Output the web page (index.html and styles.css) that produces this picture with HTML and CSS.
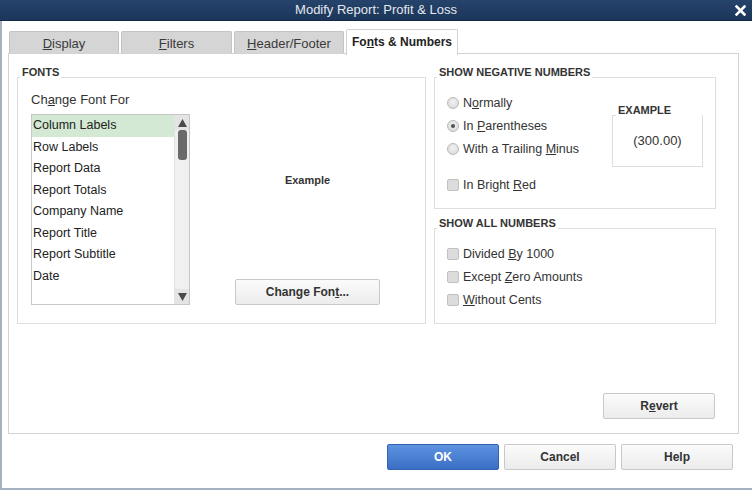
FILE: index.html
```html
<!DOCTYPE html>
<html>
<head>
<meta charset="utf-8">
<title>Modify Report: Profit &amp; Loss</title>
<link rel="stylesheet" href="styles.css">
</head>
<body>
<div class="titlebar">
  <span></span>
  <span class="title">Modify Report: Profit &amp; Loss</span>
  <span class="close"><svg width="11" height="11" viewBox="0 0 11 11"><path d="M1.5 1.5 L9.5 9.5 M9.5 1.5 L1.5 9.5" stroke="#fff" stroke-width="2.6" stroke-linecap="square"/></svg></span>
</div>
<div class="main">
  <div class="tabs">
    <div class="tab t1"><u>D</u>isplay</div>
    <div class="tab t2"><u>F</u>ilters</div>
    <div class="tab t3"><u>H</u>eader/Footer</div>
    <div class="tab t4 active">Fo<u>n</u>ts &amp; Numbers</div>
  </div>
  <div class="panel">
    <div class="panel-top">
      <div class="group fonts-group">
        <div class="legend">Fonts</div>
        <div class="fonts-body">
          <div class="label">Ch<u>a</u>nge Font For</div>
          <div class="fonts-row">
            <div class="listbox">
              <div class="items">
                <div class="item sel">Column Labels</div>
                <div class="item">Row Labels</div>
                <div class="item">Report Data</div>
                <div class="item">Report Totals</div>
                <div class="item">Company Name</div>
                <div class="item">Report Title</div>
                <div class="item">Report Subtitle</div>
                <div class="item">Date</div>
              </div>
              <div class="scrollbar">
                <div class="arrow up"><svg width="9" height="8" viewBox="0 0 9 8"><polygon points="4.5,0 9,8 0,8" fill="#4a4a4a"/></svg></div>
                <div class="track"><div class="thumb"></div></div>
                <div class="arrow down"><svg width="9" height="8" viewBox="0 0 9 8"><polygon points="0,0 9,0 4.5,8" fill="#4a4a4a"/></svg></div>
              </div>
            </div>
            <div class="preview">
              <div class="example-label">Example</div>
              <button class="btn change-btn">Change Fon<u>t</u>...</button>
            </div>
          </div>
        </div>
      </div>
      <div class="right-col">
        <div class="group neg-group">
          <div class="legend">Show Negative Numbers</div>
          <div class="neg-body">
            <div class="options">
              <div class="opt first"><span class="radio"></span><span>N<u>o</u>rmally</span></div>
              <div class="opt"><span class="radio on"></span><span>In <u>P</u>arentheses</span></div>
              <div class="opt"><span class="radio"></span><span>With a Trailing <u>M</u>inus</span></div>
              <div class="opt red"><span class="check"></span><span>In Bright <u>R</u>ed</span></div>
            </div>
            <div class="group example-box">
              <div class="legend">Example</div>
              <div class="example-value">(300.00)</div>
            </div>
          </div>
        </div>
        <div class="group all-group">
          <div class="legend">Show All Numbers</div>
          <div class="options">
            <div class="opt first"><span class="check"></span><span>Divided <u>B</u>y 1000</span></div>
            <div class="opt"><span class="check"></span><span>Except <u>Z</u>ero Amounts</span></div>
            <div class="opt"><span class="check"></span><span><u>W</u>ithout Cents</span></div>
          </div>
        </div>
      </div>
    </div>
    <div class="revert-row">
      <button class="btn">R<u>e</u>vert</button>
    </div>
  </div>
  <div class="footer">
    <button class="btn primary">OK</button>
    <button class="btn">Cancel</button>
    <button class="btn">Help</button>
  </div>
</div>
</body>
</html>
```

FILE: styles.css
```css
* { box-sizing: border-box; }
html, body {
  margin: 0;
  padding: 0;
  width: 752px;
  height: 490px;
  overflow: hidden;
  background: #fff;
  font-family: "Liberation Sans", Arial, sans-serif;
  color: #222;
}
u { text-decoration: underline; text-underline-offset: 1px; }

.titlebar {
  height: 21px;
  background: linear-gradient(#26436b, #1c365a);
  border-bottom: 1px solid #142a48;
  display: grid;
  grid-template-columns: 1fr auto 1fr;
  align-items: center;
}
.title {
  color: #e4e8ee;
  font-size: 13px;
  line-height: 20px;
}
.close {
  justify-self: end;
  display: flex;
  margin-right: 6px;
}

.main {
  height: 469px;
  border-left: 2px solid #a4b2c2;
  border-bottom: 2px solid #a4b2c2;
  padding: 8px 13px 0 6px;
  display: flex;
  flex-direction: column;
}

.tabs {
  display: flex;
  align-items: flex-end;
  gap: 2px;
  height: 24px;
  padding-left: 1px;
}
.tab {
  height: 22px;
  background: #d5d5d5;
  border: 1px solid #c4c4c4;
  border-bottom: none;
  border-radius: 2px 2px 0 0;
  font-size: 13px;
  color: #3a3a3a;
  display: flex;
  align-items: center;
  justify-content: center;
  padding-top: 1px;
}
.t1 { width: 110px; }
.t2 { width: 111px; }
.t3 { width: 110px; }
.t4 { width: 112px; }
.tab.active {
  height: 26px;
  background: #fff;
  border-color: #d2d2d2;
  margin-bottom: -2px;
  position: relative;
  z-index: 1;
  font-weight: bold;
  font-size: 12px;
  color: #222;
  padding-top: 0;
  padding-bottom: 2px;
}

.panel {
  height: 381px;
  border: 1px solid #d3d3d3;
  padding: 23px 22px 14px 8px;
  display: flex;
  flex-direction: column;
}
.panel-top {
  display: flex;
  gap: 8px;
}

.group {
  border: 1px solid #dedede;
}
.legend {
  display: table;
  margin: -12px 0 0 2px;
  padding: 0 2px;
  background: #fff;
  font-size: 11px;
  line-height: 13px;
  font-weight: bold;
  text-transform: uppercase;
  color: #333;
}

.fonts-group {
  width: 409px;
  height: 247px;
}
.fonts-body {
  padding-left: 13px;
}
.label {
  font-size: 13px;
  line-height: 15px;
  margin-top: 13px;
  color: #333;
}
.fonts-row {
  display: flex;
  margin-top: 7px;
}
.listbox {
  width: 159px;
  height: 191px;
  border: 1px solid #c6c6c6;
  display: flex;
}
.items {
  flex: 1;
}
.item {
  height: 21.5px;
  line-height: 21.5px;
  font-size: 12.5px;
  padding-left: 1px;
  color: #222;
}
.item.sel {
  background: #d3e9d3;
}
.scrollbar {
  width: 15px;
  background: #f0f0f0;
  border-left: 1px solid #e2e2e2;
  display: flex;
  flex-direction: column;
}
.arrow {
  height: 15px;
  background: #e4e4e4;
  display: flex;
  align-items: center;
  justify-content: center;
}
.track {
  flex: 1;
  padding: 0 2px;
}
.thumb {
  width: 9px;
  height: 30px;
  background: #6a6a6a;
  border-radius: 3px;
  margin: 0 auto;
}
.preview {
  flex: 1;
  display: flex;
  flex-direction: column;
  align-items: center;
}
.example-label {
  margin-top: 60px;
  font-size: 11px;
  line-height: 13px;
  font-weight: bold;
  color: #333;
}
.btn {
  width: 112px;
  height: 26px;
  border: 1px solid #c8c8c8;
  border-radius: 2px;
  background: linear-gradient(#fbfbfb, #ececec);
  font-family: "Liberation Sans", Arial, sans-serif;
  font-size: 12px;
  font-weight: bold;
  color: #333;
  padding: 0;
}
.change-btn {
  width: 145px;
  margin-top: auto;
}

.right-col {
  width: 282px;
  display: flex;
  flex-direction: column;
  gap: 19px;
}
.neg-group {
  height: 132px;
}
.neg-body {
  display: flex;
  align-items: flex-start;
}
.options {
  padding-left: 12px;
}
.opt {
  display: flex;
  align-items: center;
  gap: 4px;
  height: 23px;
  font-size: 12.5px;
  color: #333;
  white-space: nowrap;
}
.opt.first { margin-top: 12px; }
.opt.red { margin-top: 13px; }
.all-group {
  height: 96px;
}
.radio {
  width: 12px;
  height: 12px;
  border-radius: 50%;
  border: 1px solid #b9b9b9;
  background: radial-gradient(circle at 50% 40%, #f2f2f2, #d6d6d6);
  display: flex;
  align-items: center;
  justify-content: center;
}
.radio.on::after {
  content: "";
  width: 4px;
  height: 4px;
  border-radius: 50%;
  background: #505050;
}
.check {
  width: 12px;
  height: 12px;
  border: 1px solid #c0c0c0;
  border-radius: 2px;
  background: #dcdcdc;
}
.example-box {
  width: 91px;
  height: 52px;
  margin: 36px 12px 0 auto;
  display: flex;
  flex-direction: column;
}
.example-box .legend {
  margin-left: 3px;
}
.example-value {
  flex: 1;
  display: flex;
  align-items: center;
  justify-content: center;
  font-size: 13px;
  color: #333;
  padding-bottom: 2px;
}

.revert-row {
  margin-top: auto;
  display: flex;
  justify-content: flex-end;
  padding-right: 1px;
}

.footer {
  display: flex;
  justify-content: flex-end;
  gap: 5px;
  margin-top: 10px;
  padding-right: 6px;
}
.btn.primary {
  background: linear-gradient(#5d93e0, #3b6fc6);
  border-color: #3262b3;
  color: #fff;
}
```
